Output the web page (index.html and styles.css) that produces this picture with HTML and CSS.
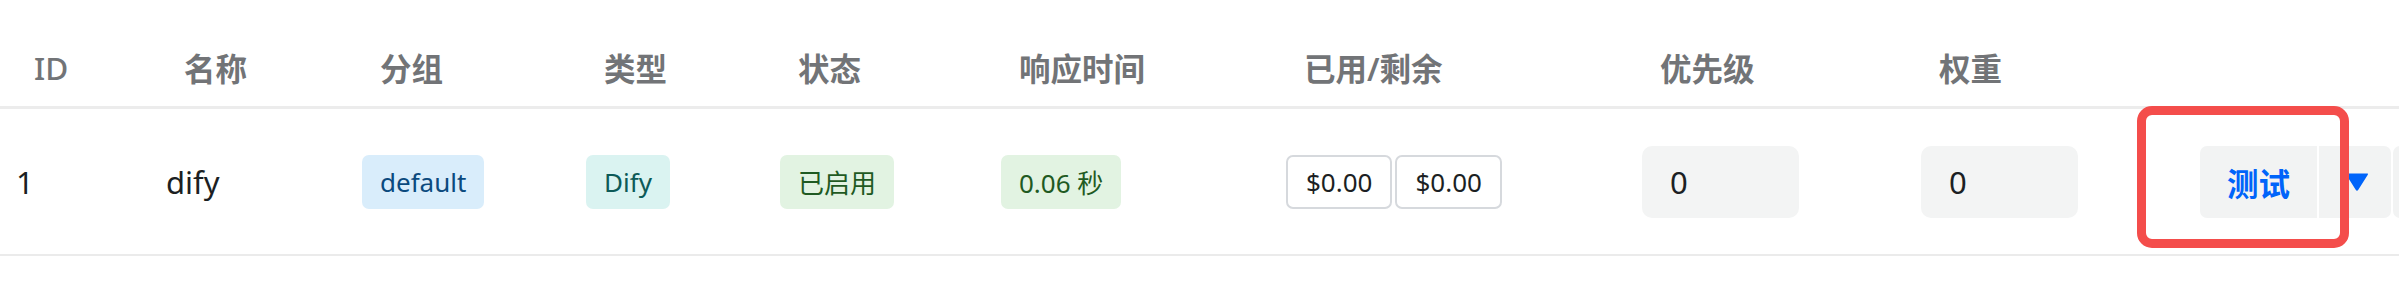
FILE: index.html
```html
<!DOCTYPE html>
<html lang="zh-CN">
<head>
<meta charset="utf-8">
<title>渠道列表</title>
<link rel="stylesheet" href="styles.css">
</head>
<body>
<div class="table">
  <div class="thead">
    <div class="th th-latin">ID</div>
    <div class="th">名称</div>
    <div class="th">分组</div>
    <div class="th">类型</div>
    <div class="th">状态</div>
    <div class="th">响应时间</div>
    <div class="th">已用/剩余</div>
    <div class="th">优先级</div>
    <div class="th">权重</div>
    <div class="th"></div>
  </div>
  <div class="row">
    <div class="td">1</div>
    <div class="td">dify</div>
    <div class="td"><span class="tag tag-blue">default</span></div>
    <div class="td"><span class="tag tag-cyan">Dify</span></div>
    <div class="td"><span class="tag tag-green">已启用</span></div>
    <div class="td"><span class="tag tag-green">0.06 秒</span></div>
    <div class="td amounts">
      <span class="amount">$0.00</span>
      <span class="amount">$0.00</span>
    </div>
    <div class="td"><div class="num-input">0</div></div>
    <div class="td"><div class="num-input">0</div></div>
    <div class="td actions">
      <div class="btn-group">
        <button class="btn btn-test">测试</button>
        <button class="btn btn-drop" aria-label="更多">
          <svg width="24" height="20" viewBox="0 0 24 20"><path d="M1.8 1.5 H22.2 Q23.6 1.5 22.8 2.7 L13.3 17.8 Q12 19.6 10.7 17.8 L1.2 2.7 Q0.4 1.5 1.8 1.5 Z" fill="#0064fa"/></svg>
        </button>
        <button class="btn btn-more"></button>
      </div>
      <div class="highlight"></div>
    </div>
  </div>
</div>
</body>
</html>
```

FILE: styles.css
```css
html, body {
  margin: 0;
  padding: 0;
  background: #ffffff;
}

body {
  width: 2399px;
  height: 291px;
  overflow: hidden;
  font-family: "Noto Sans", "Noto Sans CJK SC", sans-serif;
  color: #1c1f23;
}

.table {
  width: 2399px;
}

.thead,
.row {
  display: grid;
  grid-template-columns: 150px 196px 224px 194px 221px 285px 356px 279px 279px 1fr;
  padding-left: 16px;
}

.thead {
  height: 78px;
  padding-top: 28px;
  align-items: center;
  border-bottom: 3px solid #ececec;
}

.th {
  padding-left: 18px;
  font-size: 31.5px;
  font-weight: 600;
  color: #727477;
  white-space: nowrap;
}

.th-latin {
  font-weight: 500;
}

.row {
  height: 145px;
  align-items: center;
  border-bottom: 2px solid #ebebeb;
}

.td {
  font-size: 31px;
  white-space: nowrap;
}

.tag {
  display: inline-flex;
  align-items: center;
  height: 54px;
  padding: 0 18px;
  border-radius: 7px;
  font-size: 26px;
  box-sizing: border-box;
  vertical-align: middle;
}

.tag-blue {
  background: #d9edfb;
  color: #0b4a7e;
}

.tag-cyan {
  background: #daf3f1;
  color: #0c5a58;
}

.tag-green {
  background: #e2f3e2;
  color: #1f5a22;
}

.amounts {
  display: flex;
  gap: 3px;
}

.amount {
  display: inline-flex;
  align-items: center;
  height: 54px;
  padding: 0 18px;
  box-sizing: border-box;
  border: 2px solid #d6d9dd;
  border-radius: 7px;
  font-size: 26px;
  color: #1c1f23;
}

.num-input {
  width: 157px;
  height: 72px;
  box-sizing: border-box;
  padding-left: 28px;
  display: flex;
  align-items: center;
  background: #f3f4f4;
  border-radius: 10px;
  font-size: 31px;
}

.actions {
  position: relative;
  align-self: stretch;
  display: flex;
  align-items: center;
}

.btn-group {
  display: flex;
}

.btn {
  height: 72px;
  border: none;
  margin: 0;
  padding: 0;
  background: #f2f3f3;
  font-family: "Noto Sans", "Noto Sans CJK SC", sans-serif;
  cursor: pointer;
}

.btn-test {
  width: 117px;
  font-size: 31.5px;
  font-weight: 700;
  color: #0064fa;
  border-radius: 7px 0 0 7px;
}

.btn-drop {
  width: 72px;
  margin-left: 2px;
  border-radius: 0 7px 7px 0;
  display: flex;
  align-items: center;
  justify-content: center;
  padding-left: 4px;
}

.btn-drop svg {
  display: block;
}

.btn-more {
  width: 40px;
  margin-left: 2px;
  border-radius: 7px 0 0 7px;
}

.highlight {
  position: absolute;
  left: -63px;
  top: -3px;
  width: 212px;
  height: 142px;
  box-sizing: border-box;
  border: 9px solid #f44d4b;
  border-radius: 15px;
  pointer-events: none;
}
```
